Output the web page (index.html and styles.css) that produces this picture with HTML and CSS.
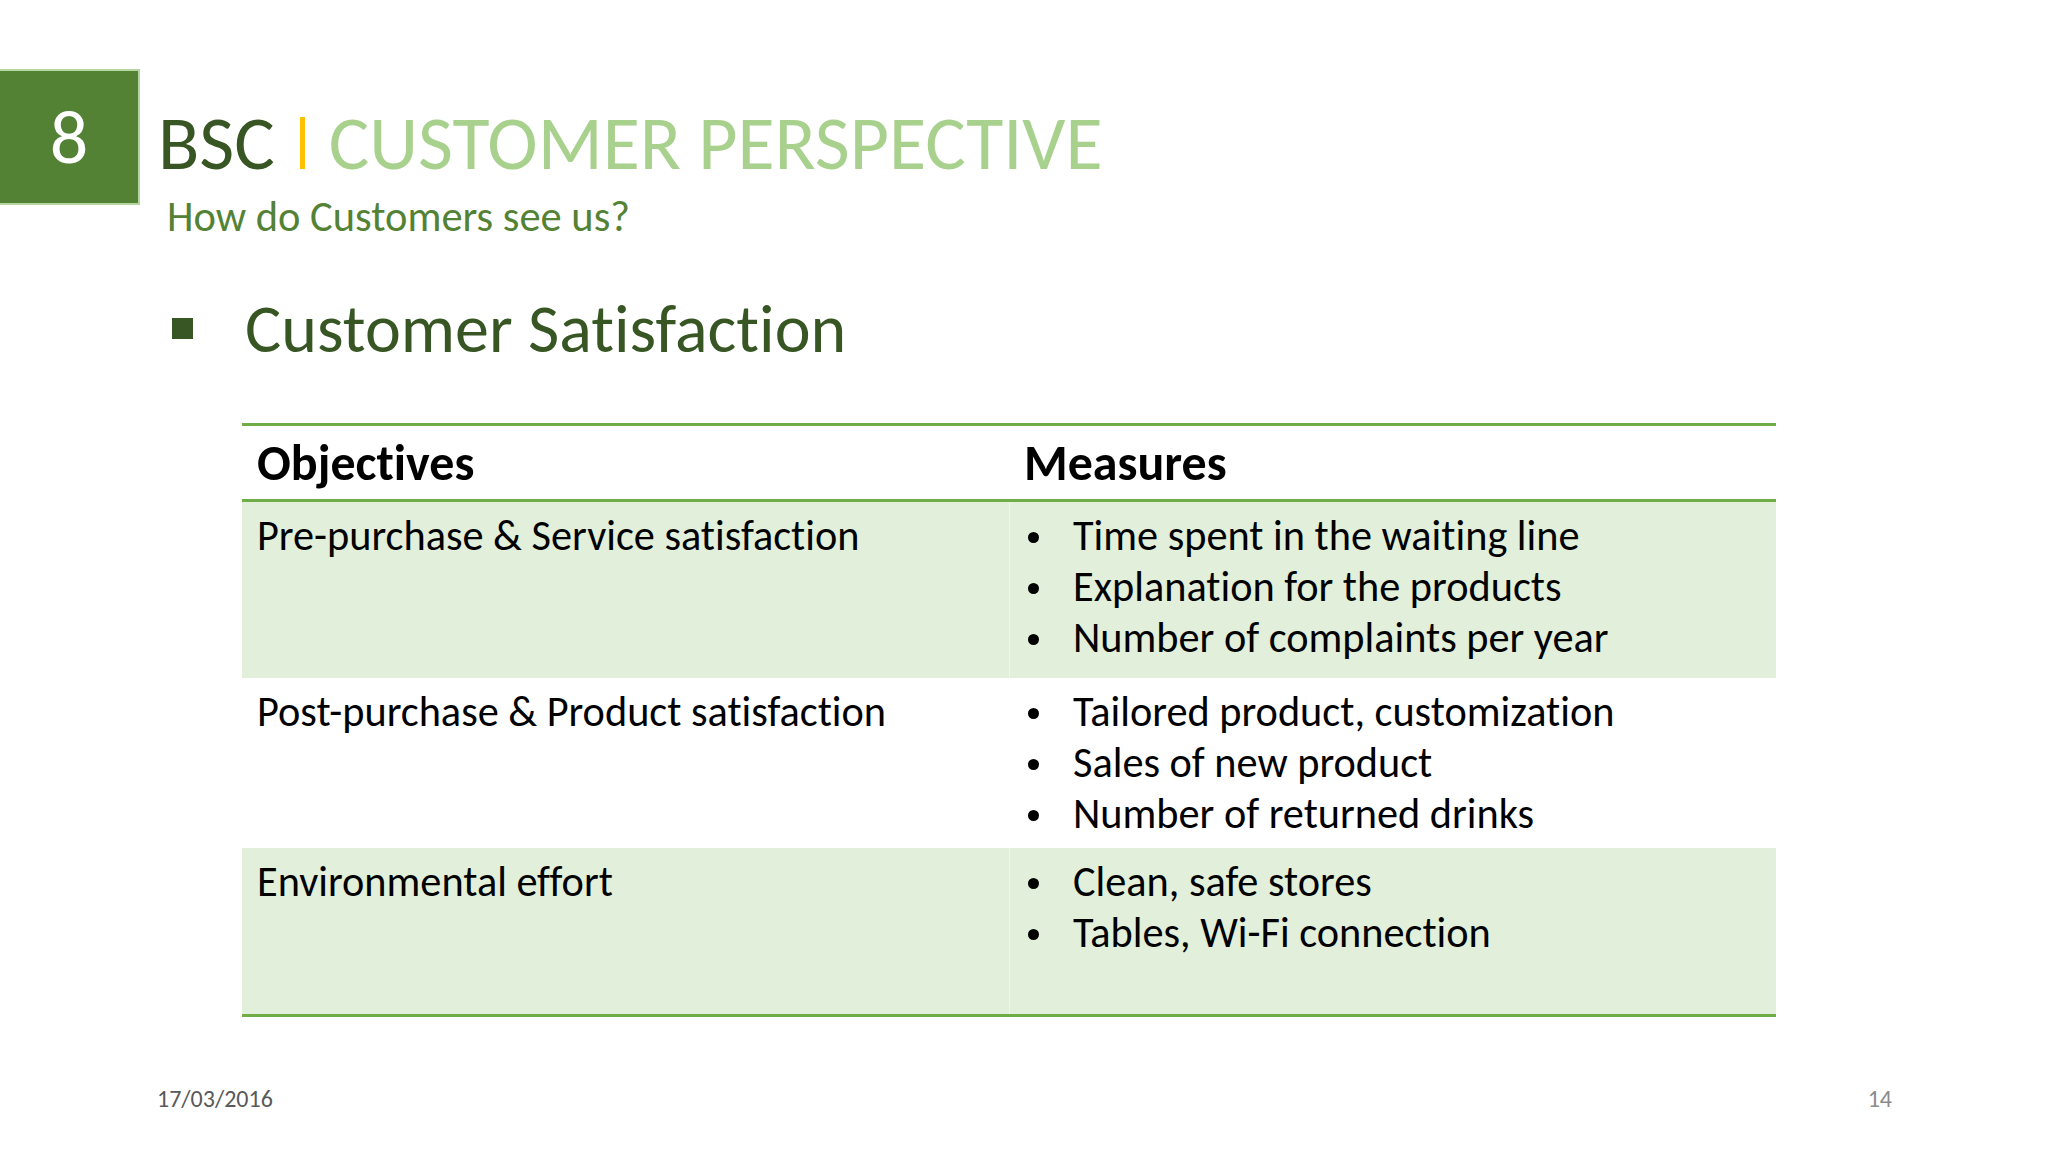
FILE: index.html
```html
<!DOCTYPE html>
<html lang="en">
<head>
<meta charset="utf-8">
<title>BSC | Customer Perspective</title>
<link rel="stylesheet" href="styles.css">
</head>
<body>
<div class="slide">
  <header class="header">
    <div class="num">8</div>
    <div class="titles">
      <h1 class="title"><span class="bsc">BSC</span><span class="sep"></span><span class="persp">CUSTOMER PERSPECTIVE</span></h1>
      <p class="subtitle">How do Customers see us?</p>
    </div>
  </header>

  <section class="section">
    <div class="sq"></div>
    <h2 class="heading">Customer Satisfaction</h2>
  </section>

  <div class="tbl">
    <div class="cell head">Objectives</div>
    <div class="cell head col2">Measures</div>

    <div class="cell green">Pre-purchase &amp; Service satisfaction</div>
    <div class="cell green col2">
      <ul class="list">
        <li><span class="dot"></span>Time spent in the waiting line</li>
        <li><span class="dot"></span>Explanation for the products</li>
        <li><span class="dot"></span>Number of complaints per year</li>
      </ul>
    </div>

    <div class="cell">Post-purchase &amp; Product satisfaction</div>
    <div class="cell col2">
      <ul class="list">
        <li><span class="dot"></span>Tailored product, customization</li>
        <li><span class="dot"></span>Sales of new product</li>
        <li><span class="dot"></span>Number of returned drinks</li>
      </ul>
    </div>

    <div class="cell green">Environmental effort</div>
    <div class="cell green col2">
      <ul class="list">
        <li><span class="dot"></span>Clean, safe stores</li>
        <li><span class="dot"></span>Tables, Wi-Fi connection</li>
      </ul>
    </div>
  </div>

  <footer class="footer">
    <span class="date">17/03/2016</span>
    <span class="page">14</span>
  </footer>
</div>
</body>
</html>
```

FILE: styles.css
```css
* { box-sizing: border-box; }
html, body { margin: 0; padding: 0; background: #ffffff; }
body {
  font-family: Carlito, Calibri, Lato, "Open Sans", sans-serif;
  font-variant-ligatures: none;
  color: #000;
}

.slide {
  width: 2048px;
  height: 1152px;
  overflow: hidden;
  background: #ffffff;
}

.header {
  display: flex;
  align-items: flex-start;
  padding-top: 69px;
}

.num {
  width: 140px;
  height: 136px;
  flex: none;
  background: #548235;
  border: 2px solid #b5d6a0;
  border-left: none;
  color: #ffffff;
  font-size: 76px;
  font-weight: 300;
  display: flex;
  align-items: center;
  justify-content: center;
}

.titles {
  margin-left: 18px;
  margin-top: 29px;
}

.title {
  margin: 0;
  font-size: 76px;
  font-weight: 300;
  line-height: 90px;
  white-space: nowrap;
  display: flex;
  align-items: baseline;
}
.bsc { color: #375623; }
.sep {
  display: inline-block;
  width: 5px;
  height: 52px;
  background: #ffc000;
  margin: 0 24px 0 25px;
}
.persp { color: #a9d18e; }

.subtitle {
  margin: 4px 0 0 9px;
  font-size: 42.5px;
  line-height: 50px;
  color: #548235;
}

.section {
  display: flex;
  align-items: flex-start;
  margin-top: 47px;
  padding-left: 172px;
}
.sq {
  width: 21px;
  height: 21px;
  background: #375623;
  margin-top: 29px;
  flex: none;
}
.heading {
  margin: 0 0 0 52px;
  font-size: 68px;
  font-weight: 400;
  line-height: 80px;
  color: #375623;
}

.tbl {
  display: grid;
  grid-template-columns: 767px 767px;
  grid-template-rows: 76px 176px 170px 166px;
  margin: 54px 0 0 242px;
  width: 1534px;
  border-top: 3px solid #70ad47;
  border-bottom: 3px solid #70ad47;
}

.cell {
  padding: 8px 15px 0 15px;
  font-size: 42.3px;
  line-height: 51px;
}
.head {
  font-size: 50px;
  font-weight: 700;
  line-height: 60px;
  padding-top: 7px;
  border-bottom: 3px solid #70ad47;
}
.green { background: #e2efda; }
.col2 { border-left: 1px solid rgba(255,255,255,0.45); padding-left: 14px; }
.head.col2 { border-left: none; padding-left: 15px; }

.list {
  list-style: none;
  margin: 0;
  padding: 0;
}
.list li {
  display: flex;
}
.dot {
  display: block;
  width: 49px;
  height: 51px;
  flex: none;
  position: relative;
}
.dot::before {
  content: "";
  position: absolute;
  left: 4px;
  top: 22px;
  width: 11px;
  height: 11px;
  border-radius: 50%;
  background: #000;
}

.footer {
  display: flex;
  justify-content: space-between;
  align-items: baseline;
  margin-top: 67px;
  padding: 0 156px 0 157px;
  font-size: 24px;
  line-height: 30px;
}
.date { color: #595959; }
.page { color: #8b8b8b; }
```
